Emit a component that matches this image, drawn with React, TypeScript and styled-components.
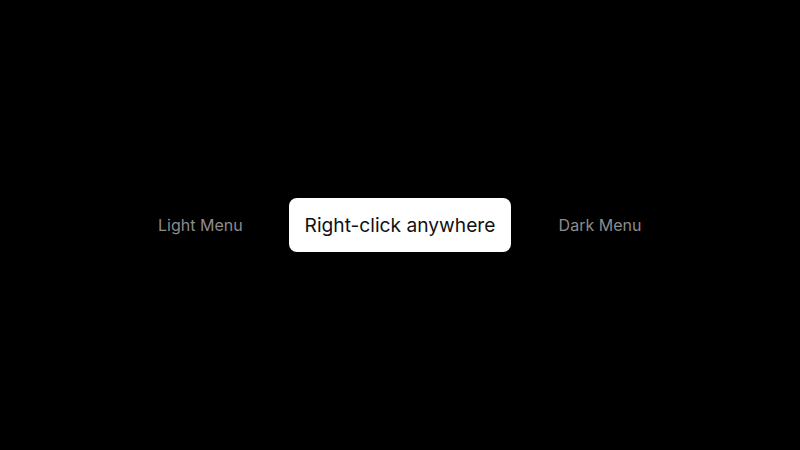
import styled, { createGlobalStyle } from 'styled-components';

const GlobalStyle = createGlobalStyle`
    html, body {
        margin: 0;
        padding: 0;
        background: #000;
        font-family: Inter, "Noto Sans", sans-serif;
    }
`;

const Page = styled.div`
    width: 800px;
    height: 450px;
    display: flex;
    align-items: center;
    justify-content: center;
    gap: 47px;
`;

const Label = styled.div`
    font-size: 16px;
    color: #8c8c8c;
    width: 84px;
    text-align: center;
    white-space: nowrap;
`;

const TriggerBox = styled.div`
    width: 222px;
    height: 54px;
    box-sizing: border-box;
    background: #fff;
    border-radius: 8px;
    display: flex;
    align-items: center;
    justify-content: center;
    font-size: 19.2px;
    color: #111;
    white-space: nowrap;
`;

const App = () => {
    return (
        <>
            <GlobalStyle />
            <Page>
                <Label>Light Menu</Label>
                <TriggerBox>Right-click anywhere</TriggerBox>
                <Label>Dark Menu</Label>
            </Page>
        </>
    )
}

export default App
